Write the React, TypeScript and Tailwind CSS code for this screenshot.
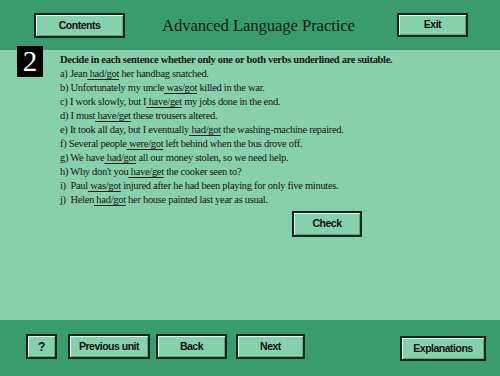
import React from "react";

const Btn = ({ label, w, h = 25, className = "" }: { label: string; w: number; h?: number; className?: string }) => (
  <div
    className={`flex items-center justify-center border-2 border-[#10271c] bg-[#87d0ad] shadow-[inset_1px_1px_0_#effff7,inset_-1px_-1px_0_#5fa583] text-[10.5px] font-bold tracking-[-0.5px] text-[#111] ${className}`}
    style={{ width: w, height: h, fontFamily: '"Liberation Sans", Arial, sans-serif' }}
  >
    {label}
  </div>
);

const U = ({ children }: { children: React.ReactNode }) => (
  <span className="underline decoration-[#222] underline-offset-[2px]">{children}</span>
);

const lines: [string, string, string][] = [
  ["a) Jean", " had/got", " her handbag snatched."],
  ["b) Unfortunately my uncle", " was/got", " killed in the war."],
  ["c) I work slowly, but I", " have/get", " my jobs done in the end."],
  ["d) I must", " have/get", " these trousers altered."],
  ["e) It took all day, but I eventually", " had/got", " the washing-machine repaired."],
  ["f) Several people", " were/got", " left behind when the bus drove off."],
  ["g) We have", " had/got", " all our money stolen, so we need help."],
  ["h) Why don't you", " have/get", " the cooker seen to?"],
  ["i)  Paul", " was/got", " injured after he had been playing for only five minutes."],
  ["j)  Helen", " had/got", " her house painted last year as usual."],
];

export default function App() {
  return (
    <div className="w-[500px] h-[376px] flex flex-col bg-[#88cfac] overflow-hidden">
      <div className="h-[50px] bg-[#3a9b6e] flex items-start pt-[13px] pl-[34px] shrink-0">
        <Btn label="Contents" w={91} />
        <div
          className="ml-[37px] mt-[3px] text-[16.7px] leading-[20px] tracking-[-0.1px] text-[#0e2118]"
          style={{ fontFamily: '"Liberation Serif", "Times New Roman", serif' }}
        >
          Advanced Language Practice
        </div>
        <Btn label="Exit" w={71} h={24} className="ml-auto mr-[32px]" />
      </div>
      <div className="flex-1 flex items-start pl-[17px]">
        <div
          className="-mt-[4px] w-[26px] h-[31px] bg-black text-white flex items-center justify-center text-[29px] leading-none"
          style={{ fontFamily: '"Liberation Serif", "Times New Roman", serif' }}
        >
          2
        </div>
        <div className="ml-[17px] pt-[3px] flex flex-col">
          <div
            className="text-[10.5px] leading-[14px] tracking-[-0.3px] text-[#151515]"
            style={{ fontFamily: '"Liberation Serif", "Times New Roman", serif' }}
          >
            <div className="font-bold">Decide in each sentence whether only one or both verbs underlined are suitable.</div>
            {lines.map(([a, b, c], i) => (
              <div key={i} className="whitespace-pre">
                {a}
                <U>{b}</U>
                {c}
              </div>
            ))}
          </div>
          <Btn label="Check" w={70} h={26} className="ml-[232px] mt-[4px]" />
        </div>
      </div>
      <div className="h-[56px] bg-[#3a9b6e] shrink-0 flex items-start pt-[14px] pl-[26px]">
        <Btn label="?" w={31} className="text-[12px]" />
        <Btn label="Previous unit" w={82} className="ml-[11px]" />
        <Btn label="Back" w={71} className="ml-[6px]" />
        <Btn label="Next" w={69} className="ml-[9px]" />
        <Btn label="Explanations" w={86} className="ml-[95px] mt-[2px]" />
      </div>
    </div>
  );
}
